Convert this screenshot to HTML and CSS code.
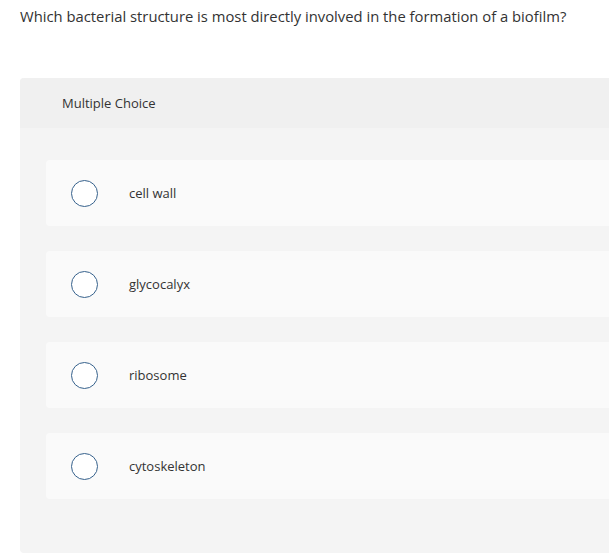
FILE: index.html
```html
<!DOCTYPE html>
<html>
<head>
<meta charset="utf-8">
<link rel="stylesheet" href="styles.css">
</head>
<body>
<div class="page">
  <p class="question">Which bacterial structure is most directly involved in the formation of a biofilm?</p>
  <div class="panel">
    <div class="panel-head">Multiple Choice</div>
    <div class="panel-body">
      <div class="option"><span class="radio"></span><span class="label">cell wall</span></div>
      <div class="option"><span class="radio"></span><span class="label">glycocalyx</span></div>
      <div class="option"><span class="radio"></span><span class="label">ribosome</span></div>
      <div class="option"><span class="radio"></span><span class="label">cytoskeleton</span></div>
    </div>
  </div>
</div>
</body>
</html>
```

FILE: styles.css
```css
html, body {
  margin: 0;
  padding: 0;
  overflow: hidden;
  background: #ffffff;
}
.page {
  padding: 6px 0 0 20px;
  font-family: "Open Sans", "Liberation Sans", sans-serif;
  color: #333333;
}
.question {
  margin: 0;
  font-size: 14.8px;
  line-height: 20px;
  color: #333333;
}
.panel {
  margin-top: 52px;
  margin-right: -30px;
  background: #f4f4f4;
  border-radius: 4px;
  height: 475px;
}
.panel-head {
  height: 50px;
  display: flex;
  align-items: center;
  padding-left: 42px;
  background: #f0f0f0;
  border-radius: 4px 4px 0 0;
  font-size: 13px;
  color: #333333;
}
.panel-body {
  padding: 32px 0 54px 26px;
  display: flex;
  flex-direction: column;
  gap: 25px;
}
.option {
  height: 66px;
  background: #fafafa;
  border-radius: 4px;
  display: flex;
  align-items: center;
  padding-left: 25px;
}
.radio {
  width: 25px;
  height: 25px;
  border: 1.5px solid #36618c;
  border-radius: 50%;
  background: #ffffff;
  flex: none;
}
.label {
  margin-left: 31px;
  font-size: 13px;
  color: #333333;
}
```
